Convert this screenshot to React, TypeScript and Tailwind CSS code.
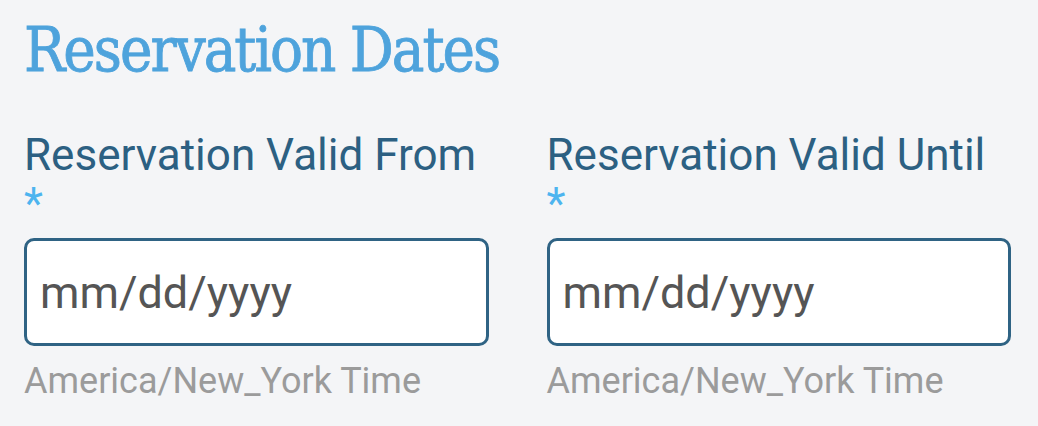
import React from "react";

const fields = [
  { label: "Reservation Valid From", name: "validFrom" },
  { label: "Reservation Valid Until", name: "validUntil" },
];

const DateField = ({ label, name }: { label: string; name: string }) => (
  <div className="flex flex-col">
    <label htmlFor={name} className="text-[44px] leading-[49px] text-[#2c6082]">
      {label}
      <span className="block text-[#4db4ef]">*</span>
    </label>
    <input
      id={name}
      type="text"
      placeholder="mm/dd/yyyy"
      className="mt-[9px] h-[108px] w-full rounded-[10px] border-[3px] border-[#2f6384] bg-white px-[13px] text-[45px] text-[#555] placeholder:text-[#555] outline-none"
    />
    <p className="mt-[14px] text-[36px] leading-[42px] text-[#9b9b9b]">America/New_York Time</p>
  </div>
);

export default function App() {
  return (
    <div className="h-[426px] w-[1038px] overflow-hidden bg-[#f4f5f7] pl-[24px] pr-[27px] font-['Roboto',sans-serif]">
      <h2 className="pt-[12px] font-['DejaVu_Serif_Condensed','DejaVu_Serif',serif] text-[61px] leading-[76px] tracking-[-2px] [font-stretch:condensed] [-webkit-text-stroke:0.8px_#4ea3dc] text-[#4ea3dc]">
        Reservation Dates
      </h2>
      <div className="mt-[43px] grid grid-cols-2 gap-[58px]">
        {fields.map((f) => (
          <DateField key={f.name} label={f.label} name={f.name} />
        ))}
      </div>
    </div>
  );
}
